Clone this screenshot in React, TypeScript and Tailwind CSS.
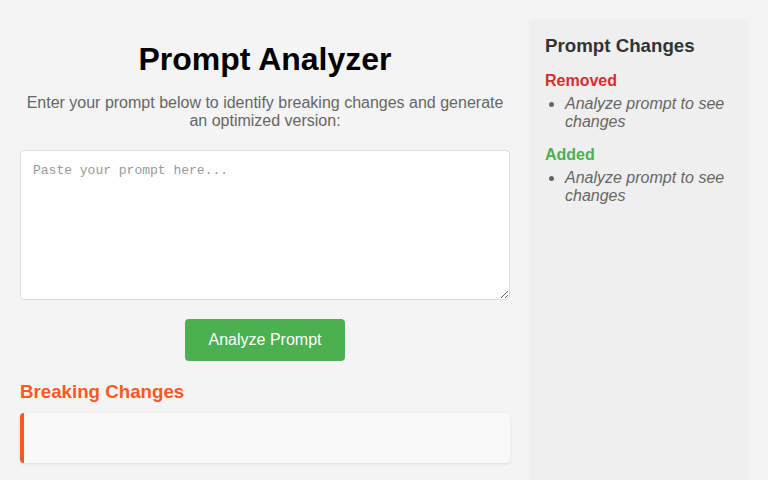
export default function App() {
  return (
    <div className="min-h-screen bg-[#f4f4f4] p-5 flex gap-5 items-stretch" style={{ fontFamily: '"Liberation Sans", Arial, sans-serif' }}>
      <div className="flex-1 min-w-0 flex flex-col">
        <h1 className="mt-[21px] text-center text-[32px] leading-[37px] font-bold text-black">Prompt Analyzer</h1>
        <p className="mt-4 text-center text-[16px] leading-[18px] text-[#666]">
          Enter your prompt below to identify breaking changes and generate an optimized version:
        </p>
        <textarea
          className="mt-5 block w-full h-[150px] rounded-[4px] border border-[#ddd] bg-white p-3 text-[13px] leading-[16px] text-[#333] placeholder:text-[#999] outline-none"
          style={{ fontFamily: '"Liberation Mono", "Courier New", monospace' }}
          placeholder="Paste your prompt here..."
        />
        <div className="flex justify-center mt-[19px]">
          <button className="h-[42px] rounded-[4px] bg-[#4caf50] px-6 text-[16px] leading-[18px] text-white">
            Analyze Prompt
          </button>
        </div>
        <h3 className="mt-5 text-[18.72px] leading-[22px] font-bold text-[#ff5722]">Breaking Changes</h3>
        <div className="mt-[10px] mb-5 h-[50px] rounded-[4px] border-l-4 border-[#ff5722] bg-[#f9f9f9] shadow-[0_1px_3px_rgba(0,0,0,0.1)]"></div>
      </div>
      <div className="w-[218px] shrink-0 bg-[#efefef] p-[15px] shadow-[0_0_4px_rgba(0,0,0,0.04)]">
        <h3 className="text-[18.72px] leading-[22px] font-bold text-[#333]">Prompt Changes</h3>
        <h4 className="mt-[15px] text-[16px] leading-[18px] font-bold text-[#d32f2f]">Removed</h4>
        <ul className="mt-[5px] list-disc pl-5 text-[16px] leading-[18px] italic text-[#666]">
          <li>Analyze prompt to see changes</li>
        </ul>
        <h4 className="mt-[15px] text-[16px] leading-[18px] font-bold text-[#4caf50]">Added</h4>
        <ul className="mt-[5px] list-disc pl-5 text-[16px] leading-[18px] italic text-[#666]">
          <li>Analyze prompt to see changes</li>
        </ul>
      </div>
    </div>
  );
}
